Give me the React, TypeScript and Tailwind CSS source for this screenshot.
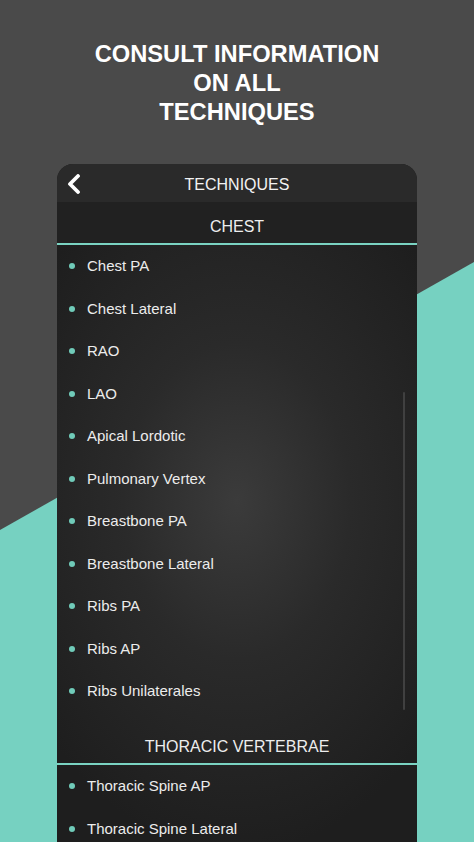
import React from 'react';

const chest = [
  'Chest PA',
  'Chest Lateral',
  'RAO',
  'LAO',
  'Apical Lordotic',
  'Pulmonary Vertex',
  'Breastbone PA',
  'Breastbone Lateral',
  'Ribs PA',
  'Ribs AP',
  'Ribs Unilaterales',
];

const thoracic = ['Thoracic Spine AP', 'Thoracic Spine Lateral'];

const Item: React.FC<{ label: string }> = ({ label }) => (
  <li className="h-[42.5px] flex items-center pl-[12px] gap-[12px]">
    <span className="w-[6px] h-[6px] rounded-full bg-[#70cbb9] shrink-0" />
    <span className="text-[15px] text-[#ececec]">{label}</span>
  </li>
);

const SectionTitle: React.FC<{ title: string; className?: string }> = ({ title, className = '' }) => (
  <div className={`flex items-end justify-center pb-[6px] border-b-2 border-[#7ad3c2] ${className}`}>
    <span className="text-[16px] leading-[20px] text-[#ededed]">{title}</span>
  </div>
);

export default function App() {
  return (
    <div
      className="relative h-[842px] w-full overflow-hidden bg-[#4a4a4a]"
      style={{ fontFamily: '"Liberation Sans", Arial, sans-serif' }}
    >
      {/* teal diagonal backdrop */}
      <div className="absolute inset-0 bg-[#76d1c1] [clip-path:polygon(0_530px,100%_262px,100%_100%,0_100%)]" />

      <div className="relative flex flex-col items-center">
        <h1 className="pt-[40px] text-center text-[23.7px] leading-[29px] font-bold text-white">
          CONSULT INFORMATION
          <br />
          ON ALL
          <br />
          TECHNIQUES
        </h1>

        <div className="mt-[37px] w-[360px] rounded-t-[16px] overflow-hidden bg-[#1f1f1f]">
          {/* header */}
          <div className="relative h-[38px] flex items-center justify-center pt-[3px] bg-[#2a2a2a]">
            <svg className="absolute left-[10px] top-[10px]" width="14" height="20" viewBox="0 0 14 20">
              <path d="M11 2 L3 10 L11 18" fill="none" stroke="#ffffff" strokeWidth="3.8" strokeLinecap="round" strokeLinejoin="round" />
            </svg>
            <span className="text-[16px] text-[#f2f2f2]">TECHNIQUES</span>
          </div>

          <SectionTitle title="CHEST" className="h-[43px] bg-[#212121]" />

          <div className="relative h-[640px] bg-[radial-gradient(ellipse_70%_55%_at_50%_40%,#3b3b3b_0%,#2a2a2a_45%,#1e1e1e_100%)]">
            <div className="absolute right-[12px] top-[147px] w-[2px] h-[318px] bg-[#404040] rounded" />
            <ul>
              {chest.map((c) => (
                <Item key={c} label={c} />
              ))}
            </ul>
            <SectionTitle title="THORACIC VERTEBRAE" className="h-[52.5px]" />
            <ul>
              {thoracic.map((c) => (
                <Item key={c} label={c} />
              ))}
            </ul>
          </div>
        </div>
      </div>
    </div>
  );
}
